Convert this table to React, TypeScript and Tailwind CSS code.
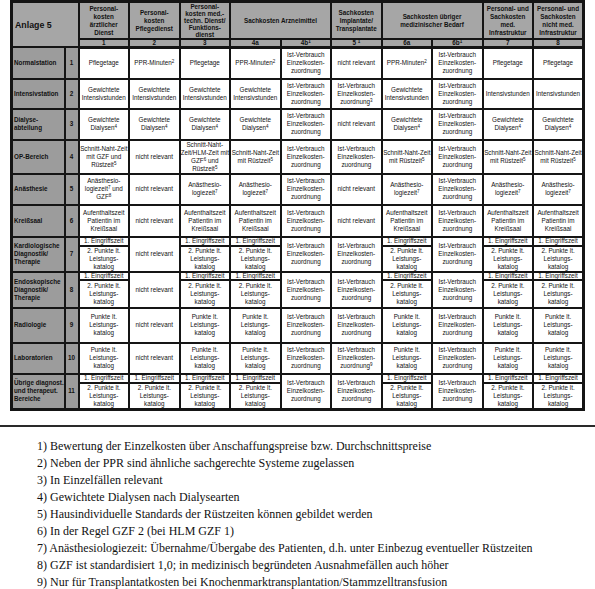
import React from 'react';

type Cell = string | { split: [string, string] };

const IST = 'Ist-Verbrauch\nEinzelkosten-\nzuordnung';
const NR = 'nicht relevant';
const PPR = 'PPR-Minuten^2';
const GI = 'Gewichtete\nIntensivstunden';
const GD = 'Gewichtete\nDialysen^4';
const SNZ = 'Schnitt-Naht-Zeit\nmit Rüstzeit^5';
const AN = 'Anästhesio-\nlogiezeit^7';
const AUF = 'Aufenthaltszeit\nPatientin im\nKreißsaal';
const PKT = 'Punkte lt.\nLeistungs-\nkatalog';
const SPLIT: Cell = { split: ['1. Eingriffszeit', '2. Punkte lt.\nLeistungs-\nkatalog'] };

const rows: { n: number; label: string; h: string; sub?: [string, string]; cells: Cell[] }[] = [
  { n: 1, label: 'Normalstation', h: 'h-[31.5px]', cells: ['Pflegetage', PPR, 'Pflegetage', PPR, IST, NR, PPR, IST, 'Pflegetage', 'Pflegetage'] },
  { n: 2, label: 'Intensivstation', h: 'h-[30.5px]', cells: [GI, GI, GI, GI, IST, 'Ist-Verbrauch\nEinzelkosten-\nzuordnung^3', GI, IST, 'Intensivstunden', 'Intensivstunden'] },
  { n: 3, label: 'Dialyse-\nabteilung', h: 'h-[30.5px]', cells: [GD, GD, GD, GD, IST, NR, GD, IST, GD, GD] },
  {
    n: 4, label: 'OP-Bereich', h: 'h-[34.5px]',
    cells: ['Schnitt-Naht-Zeit\nmit GZF und\nRüstzeit^5', NR, 'Schnitt-Naht-\nZeit/HLM-Zeit mit\nGZF^6 und\nRüstzeit^5', SNZ, IST, IST, SNZ, IST, SNZ, SNZ],
  },
  { n: 5, label: 'Anästhesie', h: 'h-[30.5px]', cells: ['Anästhesio-\nlogiezeit^7 und\nGZF^8', NR, AN, AN, IST, NR, AN, IST, AN, AN] },
  { n: 6, label: 'Kreißsaal', h: 'h-[32.5px]', cells: [AUF, NR, AUF, AUF, IST, NR, AUF, IST, AUF, AUF] },
  { n: 7, label: 'Kardiologische\nDiagnostik/\nTherapie', h: '', sub: ['h-[8.5px]', 'h-[25px]'], cells: [SPLIT, NR, SPLIT, SPLIT, IST, IST, SPLIT, IST, SPLIT, SPLIT] },
  { n: 8, label: 'Endoskopische\nDiagnostik/\nTherapie', h: '', sub: ['h-[8.5px]', 'h-[28px]'], cells: [SPLIT, NR, SPLIT, SPLIT, IST, IST, SPLIT, IST, SPLIT, SPLIT] },
  { n: 9, label: 'Radiologie', h: 'h-[34.5px]', cells: [PKT, NR, PKT, PKT, IST, IST, PKT, IST, PKT, PKT] },
  { n: 10, label: 'Laboratorien', h: 'h-[31.5px]', cells: [PKT, NR, PKT, PKT, IST, 'Ist-Verbrauch\nEinzelkosten-\nzuordnung^9', PKT, IST, PKT, PKT] },
  { n: 11, label: 'Übrige diagnost.\nund therapeut.\nBereiche', h: '', sub: ['h-[8.5px]', 'h-[25px]'], cells: [SPLIT, SPLIT, SPLIT, SPLIT, IST, IST, SPLIT, IST, SPLIT, SPLIT] },
];

const notes = [
  '1) Bewertung der Einzelkosten über Anschaffungspreise bzw. Durchschnittspreise',
  '2) Neben der PPR sind ähnliche sachgerechte Systeme zugelassen',
  '3) In Einzelfällen relevant',
  '4) Gewichtete Dialysen nach Dialysearten',
  '5) Hausindividuelle Standards der Rüstzeiten können gebildet werden',
  '6) In der Regel GZF 2 (bei HLM GZF 1)',
  '7) Anästhesiologiezeit: Übernahme/Übergabe des Patienten, d.h. unter Einbezug eventueller Rüstzeiten',
  '8) GZF ist standardisiert 1,0; in medizinisch begründeten Ausnahmefällen auch höher',
  '9) Nur für Transplantatkosten bei Knochenmarktransplantation/Stammzelltransfusion',
];

// "a\nb^5" -> lines with superscripts
function Txt({ s }: { s: string }) {
  return (
    <>
      {s.split('\n').map((line, i) => (
        <div key={i} className="whitespace-nowrap">
          {line.split(/(\^\d)/).map((part, j) =>
            part.startsWith('^') ? (
              <sup key={j} className="text-[4.5px]">{part.slice(1)}</sup>
            ) : (
              <React.Fragment key={j}>{part}</React.Fragment>
            )
          )}
        </div>
      ))}
    </>
  );
}

const td = 'border-2 border-[#151515] bg-white text-center align-middle p-0';
const th = 'border-2 border-[#151515] bg-[#a6a6a6] text-center align-middle font-bold p-0';
const lab = 'border-2 border-[#151515] bg-[#9c9c9c] align-middle font-bold p-0';

export default function App() {
  return (
    <div className="w-[595px] h-[589px] bg-white overflow-hidden">
      <table
        className="ml-[10px] table-fixed border-collapse border-[3px] border-[#151515] w-[572px] text-[6.3px] leading-[8px] text-[#111]"
        style={{ fontFamily: '"Liberation Sans", Arial, sans-serif' }}
      >
        <colgroup>
          <col className="w-[53px]" />
          <col className="w-[14px]" />
          {Array.from({ length: 10 }).map((_, i) => (
            <col key={i} className="w-[50.5px]" />
          ))}
        </colgroup>
        <thead>
          <tr className="h-[37px]">
            <th colSpan={2} rowSpan={2} className={`${th} text-left pl-[2px] text-[8.8px]`}>
              Anlage 5
            </th>
            <th className={th}><Txt s={'Personal-\nkosten\närztlicher\nDienst'} /></th>
            <th className={th}><Txt s={'Personal-\nkosten\nPflegedienst'} /></th>
            <th className={`${th} leading-[7px]`}>
              <Txt s={'Personal-\nkosten med.-\ntechn. Dienst/\nFunktions-\ndienst'} />
            </th>
            <th colSpan={2} className={th}>Sachkosten Arzneimittel</th>
            <th className={th}><Txt s={'Sachkosten\nImplantate/\nTransplantate'} /></th>
            <th colSpan={2} className={th}><Txt s={'Sachkosten übriger\nmedizinischer Bedarf'} /></th>
            <th className={th}><Txt s={'Personal- und\nSachkosten\nmed.\nInfrastruktur'} /></th>
            <th className={th}><Txt s={'Personal- und\nSachkosten\nnicht med.\nInfrastruktur'} /></th>
          </tr>
          <tr className="h-[8px]">
            {['1', '2', '3', '4a', '4b^1', '5 ^1', '6a', '6b^1', '7', '8'].map((n) => (
              <th key={n} className={`${th} leading-[5px] border-b-[3px]`}><Txt s={n} /></th>
            ))}
          </tr>
        </thead>
        <tbody>
          {rows.map((r) =>
            r.sub ? (
              <React.Fragment key={r.n}>
                <tr className={r.sub[0]}>
                  <td rowSpan={2} className={`${lab} pl-[1px]`}><Txt s={r.label} /></td>
                  <td rowSpan={2} className={`${lab} text-center`}>{r.n}</td>
                  {r.cells.map((c, i) =>
                    typeof c === 'string' ? (
                      <td key={i} rowSpan={2} className={td}><Txt s={c} /></td>
                    ) : (
                      <td key={i} className={`${td} leading-[6px]`}><Txt s={c.split[0]} /></td>
                    )
                  )}
                </tr>
                <tr className={r.sub[1]}>
                  {r.cells.map((c, i) =>
                    typeof c === 'string' ? null : (
                      <td key={i} className={td}><Txt s={c.split[1]} /></td>
                    )
                  )}
                </tr>
              </React.Fragment>
            ) : (
              <tr key={r.n} className={r.h}>
                <td className={`${lab} pl-[1px]`}><Txt s={r.label} /></td>
                <td className={`${lab} text-center`}>{r.n}</td>
                {r.cells.map((c, i) => (
                  <td key={i} className={td}><Txt s={c as string} /></td>
                ))}
              </tr>
            )
          )}
        </tbody>
      </table>

      <div className="mt-[14px] h-[2px] w-full bg-[#2a2a2a]" />

      <div
        className="pl-[37px] pt-[11px] text-[12px] leading-[17px] text-[#111]"
        style={{ fontFamily: '"Liberation Serif", "Times New Roman", serif' }}
      >
        {notes.map((n) => (
          <div key={n} className="whitespace-nowrap">{n}</div>
        ))}
      </div>
    </div>
  );
}
